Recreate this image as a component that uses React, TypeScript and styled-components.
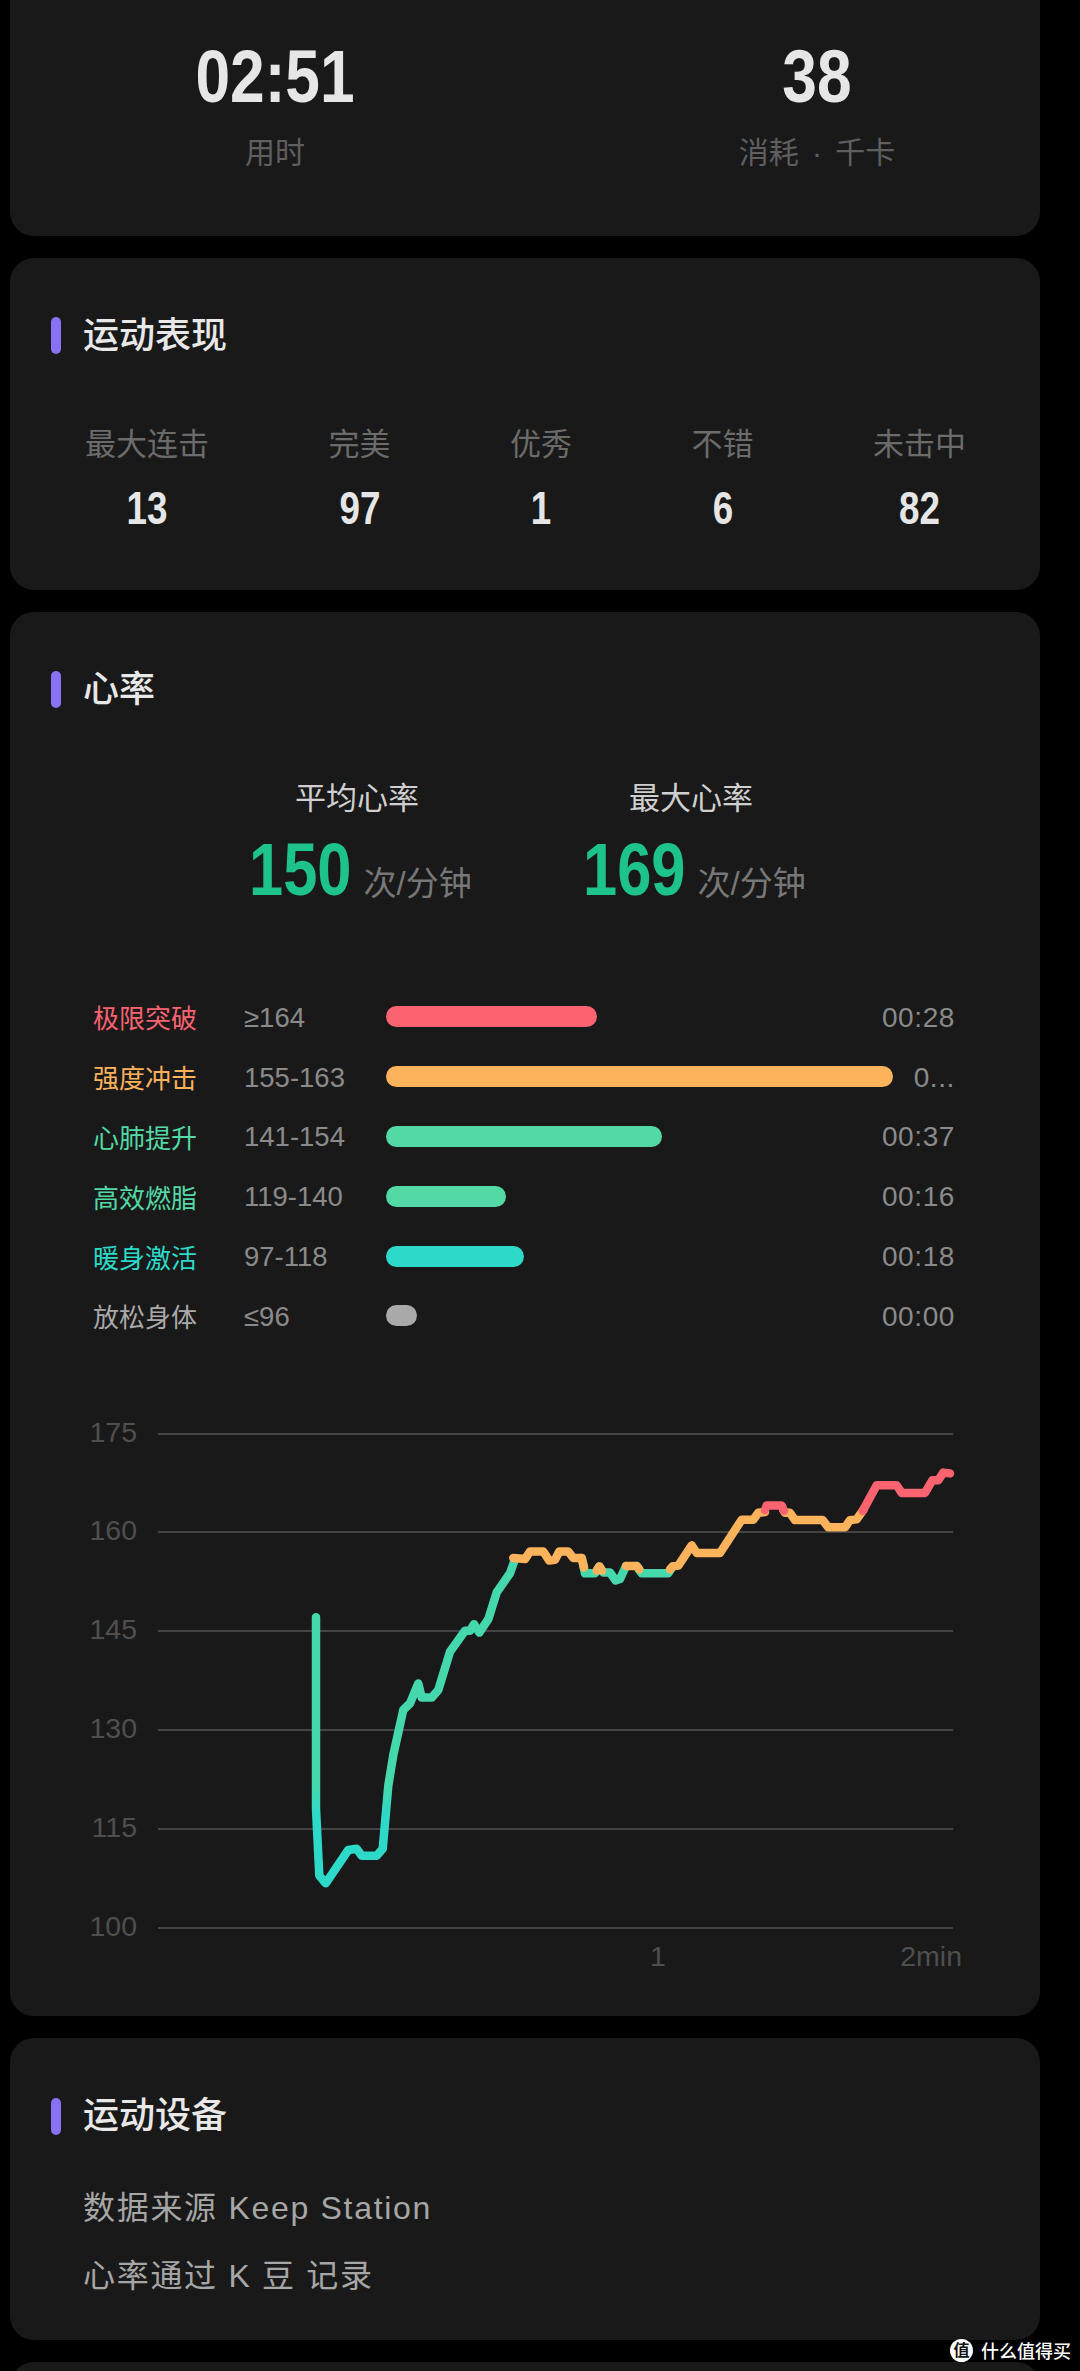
import React from 'react'
import styled, { createGlobalStyle } from 'styled-components'

const GlobalStyle = createGlobalStyle`
  html, body {
    margin: 0;
    padding: 0;
    background: #000;
  }
  body {
    font-family: "Liberation Sans", "Noto Sans CJK SC", sans-serif;
  }
`

const Page = styled.div`
  position: relative;
  width: 1080px;
  height: 2371px;
  overflow: hidden;
  padding-left: 10px;
  box-sizing: border-box;
  display: flex;
  flex-direction: column;
  gap: 22px;
`

const Card = styled.section`
  width: 1030px;
  box-sizing: border-box;
  background: #191919;
  border-radius: 24px;
  flex: none;
`

const SummaryCard = styled(Card)`
  border-radius: 0 0 24px 24px;
  padding: 36px 0 63px 65px;
  display: flex;
  gap: 142px;
`

const SummaryItem = styled.div`
  width: 400px;
  text-align: center;
`

// the app's digits are a condensed face, no narrow font is installed
const BigNumber = styled.div`
  font-weight: 700;
  font-size: 75px;
  line-height: 80px;
  color: #e6e6e6;
  transform: scaleX(0.83);
`

const MutedLabel = styled.div`
  font-size: 30px;
  line-height: 40px;
  color: #5f5f5f;
  margin-top: 17px;
  word-spacing: 5px;
`

const Title = styled.h2`
  display: flex;
  align-items: center;
  gap: 22px;
  margin: 0;
  height: 37px;
  font-size: 36px;
  line-height: 36px;
  font-weight: 500;
  color: #e8e8e8;

  &::before {
    content: '';
    width: 10px;
    height: 37px;
    border-radius: 5px;
    background: #8a70f5;
  }
`

const PerformanceCard = styled(Card)`
  padding: 59px 0 54px 41px;
`

const StatRow = styled.div`
  display: flex;
  gap: 119.5px;
  margin: 71px 0 0 34px;
`

const Stat = styled.div`
  text-align: center;
`

const StatLabel = styled.div`
  font-size: 31px;
  line-height: 40px;
  color: #6b6b6b;
  white-space: nowrap;
`

const StatValue = styled.div`
  font-weight: 700;
  font-size: 46px;
  line-height: 56px;
  color: #e6e6e6;
  margin-top: 15px;
  transform: scaleX(0.8);
`

const HeartCard = styled(Card)`
  padding: 59px 0 31px 41px;
`

const HeartSummary = styled.div`
  display: flex;
  gap: 113px;
  margin: 71px 0 0 198px;
`

const HeartItem = styled.div`
  width: 221px;
`

const HeartLabel = styled.div`
  font-size: 31px;
  line-height: 40px;
  color: #cfcfcf;
  text-align: center;
  padding-right: 5px;
`

const HeartValue = styled.div`
  display: flex;
  align-items: baseline;
  gap: 12px;
  margin-top: 11px;
  height: 80px;
  line-height: 80px;
  font-size: 33px;
  color: #777;
  white-space: nowrap;

  strong {
    display: inline-block;
    font-size: 74px;
    font-weight: 700;
    color: #1ec28b;
    transform: scaleX(0.83);
    transform-origin: left center;
    margin-right: -21px;
  }
`

const Zones = styled.div`
  margin: 77px 0 0 42px;
`

const ZoneRow = styled.div`
  display: flex;
  align-items: center;
  height: 59.8px;
  width: 862px;
  font-size: 27.5px;
`

const ZoneName = styled.span<{ $color: string }>`
  width: 151px;
  flex: none;
  font-size: 26px;
  color: ${(p) => p.$color};
`

const ZoneRange = styled.span`
  width: 142px;
  flex: none;
  padding-top: 2px;
  color: #8a8a8a;
`

const ZoneBar = styled.span<{ $color: string }>`
  flex: none;
  height: 21px;
  border-radius: 11px;
  background: ${(p) => p.$color};
`

const ZoneTime = styled.span`
  margin-left: auto;
  padding-top: 2px;
  letter-spacing: 0.6px;
  font-size: 28px;
  color: #8a8a8a;
`

const Chart = styled.svg`
  display: block;
  width: 1030px;
  height: 575px;
  margin: 64px 0 0 -41px;
`

const AxisText = styled.text`
  font-family: "Liberation Sans", sans-serif;
  font-size: 28.5px;
  fill: #4f4f4f;
`

const DeviceCard = styled(Card)`
  padding: 60px 0 42px 41px;
`

const DeviceLine = styled.div`
  font-size: 32px;
  letter-spacing: 1.7px;
  line-height: 44px;
  color: #a6a6a6;
  margin: 24px 0 0 32px;

  &:first-of-type {
    margin-top: 51px;
  }
`

const LastCard = styled(Card)`
  height: 60px;
`

const Watermark = styled.div`
  position: absolute;
  left: 950px;
  top: 2337px;
  display: flex;
  align-items: center;
  gap: 8px;
  font-size: 18px;
  font-weight: 500;
  color: #fff;
  white-space: nowrap;
`

const WatermarkLogo = styled.span`
  width: 23px;
  height: 23px;
  border-radius: 50%;
  background: #fff;
  color: #111;
  font-size: 16px;
  font-weight: 700;
  line-height: 23px;
  text-align: center;
`

const COLORS = {
  red: '#fb6371',
  orange: '#fdb25c',
  green: '#52d9a5',
  line: '#45d8ad',
  teal: '#2dd9c8',
  gray: '#a9a9a9',
}

const zones = [
  { name: '极限突破', range: '≥164', color: COLORS.red, width: 211, time: '00:28' },
  { name: '强度冲击', range: '155-163', color: COLORS.orange, width: 507, time: '0...' },
  { name: '心肺提升', range: '141-154', color: COLORS.green, width: 276, time: '00:37' },
  { name: '高效燃脂', range: '119-140', color: COLORS.green, width: 120, time: '00:16' },
  { name: '暖身激活', range: '97-118', color: COLORS.teal, width: 138, time: '00:18' },
  { name: '放松身体', range: '≤96', color: COLORS.gray, width: 31, time: '00:00' },
]

const stats = [
  { label: '最大连击', value: 13 },
  { label: '完美', value: 97 },
  { label: '优秀', value: 1 },
  { label: '不错', value: 6 },
  { label: '未击中', value: 82 },
]

// grid lines, in page pixels
const gridLines = [
  { y: 1434, label: '175' },
  { y: 1532, label: '160' },
  { y: 1631, label: '145' },
  { y: 1730, label: '130' },
  { y: 1829, label: '115' },
  { y: 1928, label: '100' },
]

// traced from crops: x = left + zx / 3, y = 1380 + zy / 2.613
const toPoints = (left: number, pts: number[][]) =>
  pts.map(([x, y]) => `${(left + x / 3).toFixed(1)},${(1380 + y / 2.613).toFixed(1)}`).join(' ')

const lowLine = toPoints(60, [
  [768, 620], [768, 1120], [778, 1295], [797, 1315], [865, 1228], [890, 1225], [905, 1243],
  [950, 1243], [968, 1225], [985, 1060], [1000, 980], [1030, 862], [1050, 845], [1075, 793],
  [1085, 830], [1115, 830], [1135, 810], [1170, 710], [1215, 655], [1230, 655], [1242, 638],
  [1258, 660], [1285, 625], [1310, 555], [1350, 505], [1365, 468],
])

const greenSegments = [
  [[245, 465], [255, 505], [285, 505], [298, 487], [310, 503], [330, 503], [347, 524], [360, 520], [378, 486]],
  [[410, 486], [425, 505], [505, 505], [518, 487]],
].map((s) => toPoints(500, s))

const orangeSegments = [
  [[40, 465], [75, 468], [90, 448], [130, 448], [148, 472], [165, 470], [178, 448], [205, 448], [220, 465], [245, 465], [252, 490]],
  [[290, 498], [298, 487], [306, 498]],
  [[378, 486], [410, 486], [418, 495]],
  [[510, 495], [518, 487], [535, 485], [575, 432], [590, 452], [660, 452], [725, 365], [760, 365], [775, 347], [795, 345]],
  [[850, 340], [855, 347], [870, 347], [885, 366], [968, 366], [985, 385], [1035, 385], [1050, 366], [1070, 364], [1090, 340]],
].map((s) => toPoints(500, s))

const redSegments = [
  [[795, 340], [800, 328], [845, 328], [852, 342]],
  [[1088, 342], [1130, 275], [1190, 275], [1205, 295], [1275, 295], [1297, 262], [1315, 262], [1330, 242], [1350, 244]],
].map((s) => toPoints(500, s))

const HeartLine = ({ points, color }: { points: string; color: string }) => (
  <polyline points={points} fill="none" stroke={color} strokeWidth="8.5" strokeLinecap="round" strokeLinejoin="round" />
)

const App = () => (
  <Page>
    <GlobalStyle />
    <SummaryCard>
      <SummaryItem>
        <BigNumber>02:51</BigNumber>
        <MutedLabel>用时</MutedLabel>
      </SummaryItem>
      <SummaryItem>
        <BigNumber>38</BigNumber>
        <MutedLabel>消耗 · 千卡</MutedLabel>
      </SummaryItem>
    </SummaryCard>

    <PerformanceCard>
      <Title>运动表现</Title>
      <StatRow>
        {stats.map((s) => (
          <Stat key={s.label}>
            <StatLabel>{s.label}</StatLabel>
            <StatValue>{s.value}</StatValue>
          </Stat>
        ))}
      </StatRow>
    </PerformanceCard>

    <HeartCard>
      <Title>心率</Title>
      <HeartSummary>
        <HeartItem>
          <HeartLabel>平均心率</HeartLabel>
          <HeartValue>
            <strong>150</strong>次/分钟
          </HeartValue>
        </HeartItem>
        <HeartItem>
          <HeartLabel>最大心率</HeartLabel>
          <HeartValue>
            <strong>169</strong>次/分钟
          </HeartValue>
        </HeartItem>
      </HeartSummary>

      <Zones>
        {zones.map((z) => (
          <ZoneRow key={z.name}>
            <ZoneName $color={z.color}>{z.name}</ZoneName>
            <ZoneRange>{z.range}</ZoneRange>
            <ZoneBar $color={z.color} style={{ width: z.width }} />
            <ZoneTime>{z.time}</ZoneTime>
          </ZoneRow>
        ))}
      </Zones>

      <Chart viewBox="10 1410 1030 575">
        <defs>
          <linearGradient id="lowGrad" gradientUnits="userSpaceOnUse" x1="0" y1="1785" x2="0" y2="1815">
            <stop offset="0" stopColor={COLORS.line} />
            <stop offset="1" stopColor={COLORS.teal} />
          </linearGradient>
        </defs>
        {gridLines.map((g) => (
          <g key={g.y}>
            <line x1="158" x2="953" y1={g.y} y2={g.y} stroke="#444" strokeWidth="2" />
            <AxisText x="137" y={g.y + 8} textAnchor="end">
              {g.label}
            </AxisText>
          </g>
        ))}
        <AxisText x="658" y="1966" textAnchor="middle">1</AxisText>
        <AxisText x="962" y="1966" textAnchor="end">2min</AxisText>
        <HeartLine points={lowLine} color="url(#lowGrad)" />
        {greenSegments.map((p) => <HeartLine key={p} points={p} color={COLORS.line} />)}
        {orangeSegments.map((p) => <HeartLine key={p} points={p} color={COLORS.orange} />)}
        {redSegments.map((p) => <HeartLine key={p} points={p} color={COLORS.red} />)}
      </Chart>
    </HeartCard>

    <DeviceCard>
      <Title>运动设备</Title>
      <DeviceLine>数据来源 Keep Station</DeviceLine>
      <DeviceLine>心率通过 K 豆 记录</DeviceLine>
    </DeviceCard>

    <LastCard />

    <Watermark>
      <WatermarkLogo>值</WatermarkLogo>
      什么值得买
    </Watermark>
  </Page>
)

export default App
